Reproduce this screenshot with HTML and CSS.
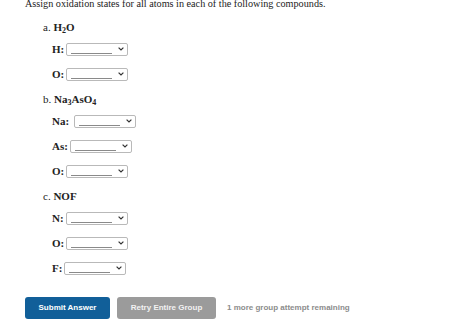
FILE: index.html
```html
<!DOCTYPE html>
<html>
<head>
<meta charset="utf-8">
<link rel="stylesheet" href="styles.css">
</head>
<body>
<div class="page">
  <p class="prompt">Assign oxidation states for all atoms in each of the following compounds.</p>

  <div class="part">
    <div class="heading">a. <b>H<sub>2</sub>O</b></div>
    <div class="row"><span class="atom">H:</span><span class="pick"><select><option></option></select><svg class="chev" viewBox="0 0 6 4"><path d="M0.6 0.6 L3 3 L5.4 0.6"/></svg></span></div>
    <div class="row"><span class="atom">O:</span><span class="pick"><select><option></option></select><svg class="chev" viewBox="0 0 6 4"><path d="M0.6 0.6 L3 3 L5.4 0.6"/></svg></span></div>
  </div>

  <div class="part">
    <div class="heading">b. <b>Na<sub>3</sub>AsO<sub>4</sub></b></div>
    <div class="row"><span class="atom atom-wide">Na:</span><span class="pick"><select><option></option></select><svg class="chev" viewBox="0 0 6 4"><path d="M0.6 0.6 L3 3 L5.4 0.6"/></svg></span></div>
    <div class="row"><span class="atom">As:</span><span class="pick"><select><option></option></select><svg class="chev" viewBox="0 0 6 4"><path d="M0.6 0.6 L3 3 L5.4 0.6"/></svg></span></div>
    <div class="row"><span class="atom">O:</span><span class="pick"><select><option></option></select><svg class="chev" viewBox="0 0 6 4"><path d="M0.6 0.6 L3 3 L5.4 0.6"/></svg></span></div>
  </div>

  <div class="part">
    <div class="heading">c. <b>NOF</b></div>
    <div class="row"><span class="atom">N:</span><span class="pick"><select><option></option></select><svg class="chev" viewBox="0 0 6 4"><path d="M0.6 0.6 L3 3 L5.4 0.6"/></svg></span></div>
    <div class="row"><span class="atom">O:</span><span class="pick"><select><option></option></select><svg class="chev" viewBox="0 0 6 4"><path d="M0.6 0.6 L3 3 L5.4 0.6"/></svg></span></div>
    <div class="row"><span class="atom">F:</span><span class="pick"><select><option></option></select><svg class="chev" viewBox="0 0 6 4"><path d="M0.6 0.6 L3 3 L5.4 0.6"/></svg></span></div>
  </div>

  <div class="actions">
    <button class="btn btn-submit">Submit Answer</button>
    <button class="btn btn-retry">Retry Entire Group</button>
    <span class="remaining">1 more group attempt remaining</span>
  </div>
</div>
</body>
</html>
```

FILE: styles.css
```css
html, body {
  margin: 0;
  padding: 0;
  background: #ffffff;
}

.page {
  padding-left: 25px;
  margin-top: -3px;
  font-family: "Liberation Serif", "Times New Roman", serif;
  font-size: 10.2px;
  color: #222222;
}

.prompt {
  margin: 0;
  height: 17.5px;
  line-height: 14.5px;
}

.part {
  padding-left: 18px;
}

.heading {
  height: 22px;
  line-height: 25px;
  font-size: 11px;
  white-space: nowrap;
}

.heading b,
.atom {
  font-weight: bold;
}

sub {
  font-size: 8px;
  vertical-align: -2px;
  line-height: 0;
}

.row {
  height: 25px;
  padding-left: 9px;
  display: flex;
  align-items: center;
  gap: 2px;
  font-size: 11px;
}

.atom {
  line-height: 25px;
}

.atom-wide {
  margin-right: 3px;
}

.pick {
  position: relative;
  display: inline-block;
  width: 62px;
  height: 13px;
}

.pick select {
  -webkit-appearance: none;
  appearance: none;
  display: block;
  width: 62px;
  height: 13px;
  margin: 0;
  padding: 0;
  border: 1px solid #b9b9b9;
  border-radius: 2px;
  background-color: #ffffff;
  background-image: linear-gradient(#8a8a8a, #8a8a8a);
  background-repeat: no-repeat;
  background-size: 41px 1px;
  background-position: 4px 9px;
  font-size: 9px;
}

.chev {
  position: absolute;
  right: 4px;
  top: 4.5px;
  width: 6px;
  height: 4px;
  fill: none;
  stroke: #333333;
  stroke-width: 1.2;
  pointer-events: none;
}

.actions {
  margin-top: 16px;
  display: flex;
  align-items: center;
  font-family: "Liberation Sans", Arial, sans-serif;
}

.btn {
  height: 22px;
  margin: 0 7px 0 0;
  padding: 0;
  border: none;
  border-radius: 3px;
  font-family: "Liberation Sans", Arial, sans-serif;
  font-size: 8px;
  font-weight: bold;
  color: #ffffff;
}

.btn-submit {
  width: 85px;
  background: #115f99;
}

.btn-retry {
  width: 99px;
  background: #9b9b9b;
  color: #f2f2f2;
  margin-right: 11px;
}

.remaining {
  font-size: 8px;
  font-weight: bold;
  color: #8c8c8c;
}
```
